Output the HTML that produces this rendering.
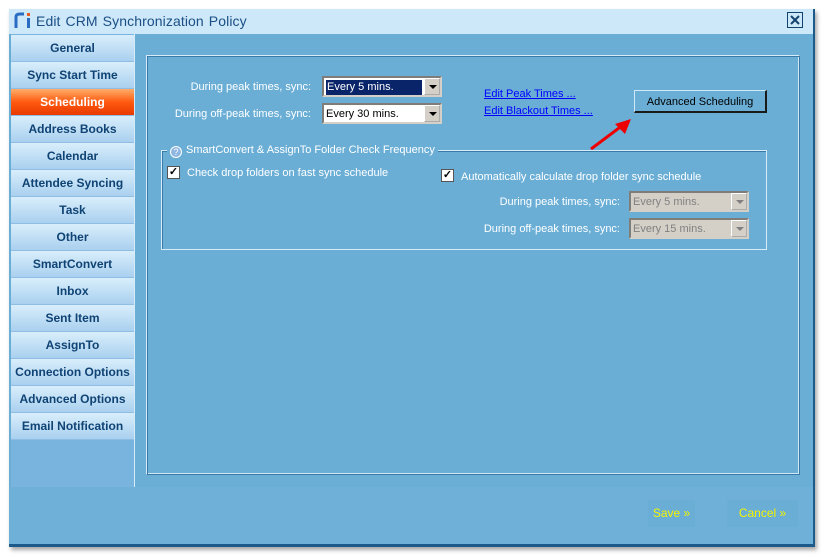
<!DOCTYPE html>
<html><head><meta charset="utf-8"><style>
*{margin:0;padding:0;box-sizing:border-box}
body{width:824px;height:557px;background:#fff;position:relative;overflow:hidden;font-family:"Liberation Sans",sans-serif;font-size:11px}
.abs{position:absolute}
#win{left:9px;top:9px;width:806px;height:538px;background:#6aaed6;border-right:2px solid #1d5a8c;border-bottom:3px solid #1d5a8c;box-shadow:2px 3px 4px rgba(0,0,0,.35)}
#title{left:9px;top:9px;width:804px;height:25px;background:#cde8f8}
#title span{position:absolute;left:27px;top:4px;font-size:14px;color:#1b4f86;font-family:"Liberation Sans",sans-serif;letter-spacing:0.1px;word-spacing:1px}
.tab{position:absolute;left:11px;width:123px;height:27px;background:linear-gradient(#d9eefb,#a9d0ef);color:#0f4374;font-weight:bold;font-size:12px;text-align:center;line-height:27px;white-space:nowrap;border-bottom:1px solid #8fbde3}
.tab.act{background:linear-gradient(#ffae6a,#ff5a10 50%,#e83a00);color:#fff}
#side{left:11px;top:34px;width:124px;height:453px;background:#78b4de;border-right:1px solid #d5ecfa}
#panel{left:146px;top:55px;width:654px;height:420px;border:1px solid #d6ecfa;border-right-color:#3a7aa8;border-bottom-color:#3a7aa8;box-shadow:inset 1px 1px 0 #3a7aa8,inset -1px -1px 0 #cfe8f8}
.lbl{position:absolute;color:#fff;font-size:11px;text-align:right;white-space:nowrap}
.sel{position:absolute;height:21px;background:#fff;border:2px inset #d4d0c8;font-size:11px;padding:3px 2px 1px;color:#000}
.sel b{position:absolute;right:0;top:0;width:16px;height:17px;background:#d4d0c8;border:1px outset #fff}
.sel b:after{content:"";position:absolute;left:4px;top:6px;border:4px solid transparent;border-top:4px solid #000;border-bottom:0}
.sel.dis{background:#d4d0c8;color:#808080}
.sel.dis b:after{border-top-color:#808080}
.sel.hi{padding-top:2px}
.sel.hi span{background:#0a246a;color:#fff;display:block;height:15px;line-height:15px;margin-right:16px;padding-left:1px}
a{color:#0000ff;position:absolute;font-size:11px;text-decoration:underline}
.cb{position:absolute;width:13px;height:13px;background:#fff;border:1px solid #555;font-size:11px;line-height:10px;text-align:center;font-weight:bold;color:#000}
</style></head><body>
<div id="win" class="abs"></div>
<div id="title" class="abs"><span>Edit CRM Synchronization Policy</span>
<svg class="abs" style="left:5px;top:2px" width="20" height="18"><path d="M2 17V6q0-3 4-3h4" stroke="#2a6bc4" stroke-width="3" fill="none"/><rect x="13" y="7" width="3" height="10" fill="#2a6bc4"/><rect x="13" y="2" width="3" height="3" fill="#e85a20"/></svg>
<svg class="abs" style="left:778px;top:3px" width="16" height="16"><rect x="0.5" y="0.5" width="15" height="15" fill="none" stroke="#14426e"/><path d="M4 4l8 8M12 4l-8 8" stroke="#14426e" stroke-width="2"/></svg>
</div>
<div id="side" class="abs"></div>
<div class="tab" style="top:35px">General</div>
<div class="tab" style="top:62px">Sync Start Time</div>
<div class="tab act" style="top:89px">Scheduling</div>
<div class="tab" style="top:116px">Address Books</div>
<div class="tab" style="top:143px">Calendar</div>
<div class="tab" style="top:170px">Attendee Syncing</div>
<div class="tab" style="top:197px">Task</div>
<div class="tab" style="top:224px">Other</div>
<div class="tab" style="top:251px">SmartConvert</div>
<div class="tab" style="top:278px">Inbox</div>
<div class="tab" style="top:305px">Sent Item</div>
<div class="tab" style="top:332px">AssignTo</div>
<div class="tab" style="top:359px">Connection Options</div>
<div class="tab" style="top:386px">Advanced Options</div>
<div class="tab" style="top:413px">Email Notification</div>
<div id="panel" class="abs"></div>

<div class="lbl" style="left:150px;width:161px;top:81px">During peak times, sync:</div>
<div class="sel hi" style="left:322px;top:76px;width:120px"><span>Every 5 mins.</span><b></b></div>
<div class="lbl" style="left:150px;width:161px;top:108px">During off-peak times, sync:</div>
<div class="sel" style="left:322px;top:103px;width:120px">Every 30 mins.<b></b></div>

<a style="left:484px;top:88px">Edit Peak Times ...</a>
<a style="left:484px;top:105px">Edit Blackout Times ...</a>
<div class="abs" style="left:634px;top:90px;width:133px;height:23px;background:#6aaed6;border:1px solid #cfe8f8;border-right:2px solid #1a1a1a;border-bottom:2px solid #1a1a1a;text-align:center;line-height:22px;color:#000">Advanced Scheduling</div>
<svg class="abs" style="left:585px;top:115px" width="50" height="40"><path d="M6 34L38 10" stroke="#e00" stroke-width="3"/><path d="M46 4L30 9L40 19Z" fill="#e00"/></svg>

<div class="abs" style="left:161px;top:150px;width:606px;height:100px;border:1px solid #d6ecfa;box-shadow:inset 1px 1px 0 #3a7aa8"></div>
<div class="abs" style="left:167px;top:143px;background:#6aaed6;padding:0 3px;color:#fff;height:15px;line-height:15px;white-space:nowrap"><span style="display:inline-block;width:12px;height:12px;border-radius:50%;background:#8fb6e0;border:1px solid #fff;color:#fff;font-size:9px;text-align:center;line-height:10px;vertical-align:-2px;margin-right:4px">?</span>SmartConvert &amp; AssignTo Folder Check Frequency</div>
<div class="cb" style="left:167px;top:166px">✓</div>
<div class="lbl" style="left:187px;top:167px;text-align:left">Check drop folders on fast sync schedule</div>
<div class="cb" style="left:441px;top:169px">✓</div>
<div class="lbl" style="left:461px;top:171px;text-align:left">Automatically calculate drop folder sync schedule</div>
<div class="lbl" style="left:450px;width:170px;top:196px">During peak times, sync:</div>
<div class="sel dis" style="left:629px;top:191px;width:120px">Every 5 mins.<b></b></div>
<div class="lbl" style="left:450px;width:170px;top:223px">During off-peak times, sync:</div>
<div class="sel dis" style="left:629px;top:218px;width:120px">Every 15 mins.<b></b></div>

<div class="abs" style="left:10px;top:487px;width:803px;height:57px;background:#6eb0d8"></div>
<div class="abs" style="left:648px;top:500px;width:47px;height:27px;background:#6aaed6;color:#f4f400;text-align:center;line-height:27px;font-size:12px">Save »</div>
<div class="abs" style="left:727px;top:500px;width:71px;height:27px;background:#6aaed6;color:#f4f400;text-align:center;line-height:27px;font-size:12px">Cancel »</div>
</body></html>
